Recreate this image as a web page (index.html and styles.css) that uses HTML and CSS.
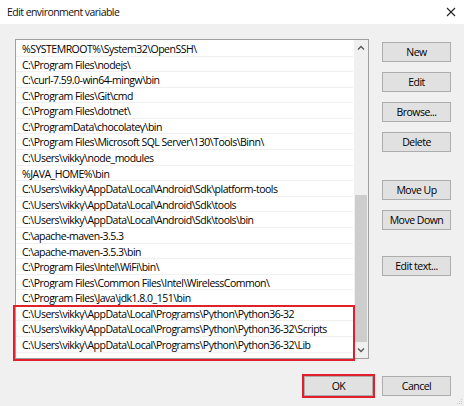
FILE: index.html
```html
<!DOCTYPE html>
<html>
<head>
<meta charset="utf-8">
<link rel="stylesheet" href="styles.css">
</head>
<body>
<div class="window">
  <div class="titlebar">
    <span class="title">Edit environment variable</span>
    <svg class="close" width="10" height="10" viewBox="0 0 10 10"><path d="M1 1 L9 9 M9 1 L1 9" stroke="#222" stroke-width="1.1" fill="none"/></svg>
  </div>
  <div class="content">
    <div class="listwrap">
      <div class="list">
        <div class="rows">
          <div class="row">%SYSTEMROOT%\System32\OpenSSH\</div>
          <div class="row">C:\Program Files\nodejs\</div>
          <div class="row">C:\curl-7.59.0-win64-mingw\bin</div>
          <div class="row">C:\Program Files\Git\cmd</div>
          <div class="row">C:\Program Files\dotnet\</div>
          <div class="row">C:\ProgramData\chocolatey\bin</div>
          <div class="row">C:\Program Files\Microsoft SQL Server\130\Tools\Binn\</div>
          <div class="row">C:\Users\vikky\node_modules</div>
          <div class="row">%JAVA_HOME%\bin</div>
          <div class="row">C:\Users\vikky\AppData\Local\Android\Sdk\platform-tools</div>
          <div class="row">C:\Users\vikky\AppData\Local\Android\Sdk\tools</div>
          <div class="row">C:\Users\vikky\AppData\Local\Android\Sdk\tools\bin</div>
          <div class="row">C:\apache-maven-3.5.3</div>
          <div class="row">C:\apache-maven-3.5.3\bin</div>
          <div class="row">C:\Program Files\Intel\WiFi\bin\</div>
          <div class="row">C:\Program Files\Common Files\Intel\WirelessCommon\</div>
          <div class="row">C:\Program Files\Java\jdk1.8.0_151\bin</div>
          <div class="row">C:\Users\vikky\AppData\Local\Programs\Python\Python36-32</div>
          <div class="row">C:\Users\vikky\AppData\Local\Programs\Python\Python36-32\Scripts</div>
          <div class="row">C:\Users\vikky\AppData\Local\Programs\Python\Python36-32\Lib</div>
        </div>
        <div class="scrollbar">
          <div class="arrow">
            <svg width="8" height="6" viewBox="0 0 8 6"><path d="M1 4.5 L4 1.5 L7 4.5" stroke="#555" stroke-width="1.3" fill="none"/></svg>
          </div>
          <div class="track"><div class="thumb"></div></div>
          <div class="arrow">
            <svg width="8" height="6" viewBox="0 0 8 6"><path d="M1 1.5 L4 4.5 L7 1.5" stroke="#555" stroke-width="1.3" fill="none"/></svg>
          </div>
        </div>
      </div>
      <div class="highlight"></div>
    </div>
    <div class="buttons">
      <button class="btn">New</button>
      <button class="btn">Edit</button>
      <button class="btn">Browse...</button>
      <button class="btn">Delete</button>
      <button class="btn g1">Move Up</button>
      <button class="btn">Move Down</button>
      <button class="btn g2">Edit text...</button>
    </div>
  </div>
  <div class="footer">
    <button class="btn ok">OK</button>
    <button class="btn">Cancel</button>
  </div>
  <svg class="grip" width="8" height="8" viewBox="0 0 8 8"><g fill="#c8c8c8"><rect x="6" y="2" width="1" height="1"/><rect x="4" y="4" width="1" height="1"/><rect x="6" y="4" width="1" height="1"/><rect x="2" y="6" width="1" height="1"/><rect x="4" y="6" width="1" height="1"/><rect x="6" y="6" width="1" height="1"/></g></svg>
</div>
</body>
</html>
```

FILE: styles.css
```css
html, body {
  margin: 0;
  padding: 0;
}
body {
  width: 464px;
  height: 406px;
  overflow: hidden;
  background: #f0f0f0;
  font-family: "Open Sans", "Noto Sans", sans-serif;
  color: #000;
}
.window {
  position: relative;
  width: 464px;
  height: 406px;
  background: #f0f0f0;
}
.titlebar {
  height: 24px;
  background: #fff;
  display: flex;
  align-items: center;
  justify-content: space-between;
  padding: 0 8px 0 7px;
  box-sizing: border-box;
}
.title {
  font-size: 10.5px;
  letter-spacing: -0.55px;
  color: #111;
}
.close {
  display: block;
}
.content {
  display: flex;
  padding: 15px 13px 0 15px;
  gap: 13px;
}
.listwrap {
  position: relative;
  width: 354px;
  height: 320px;
}
.list {
  box-sizing: border-box;
  width: 354px;
  height: 320px;
  border: 1px solid #a0a0a0;
  background: #fff;
  display: flex;
}
.rows {
  flex: 1;
  padding-top: 1px;
  padding-right: 1px;
}
.row {
  box-sizing: border-box;
  height: 15.58px;
  line-height: 16px;
  font-size: 10.5px;
  letter-spacing: -0.5px;
  padding-left: 6px;
  border-bottom: 1px solid #f0f0f0;
  white-space: nowrap;
  overflow: hidden;
}
.scrollbar {
  width: 14px;
  background: #f0f0f0;
  display: flex;
  flex-direction: column;
}
.arrow {
  height: 17px;
  display: flex;
  align-items: center;
  justify-content: center;
}
.track {
  flex: 1;
}
.thumb {
  margin: 139px 1px 0 1px;
  height: 147px;
  background: #cdcdcd;
}
.highlight {
  position: absolute;
  left: -2px;
  top: 266px;
  width: 342px;
  height: 56px;
  box-sizing: border-box;
  border: 2px solid #e0212b;
}
.buttons {
  display: flex;
  flex-direction: column;
  gap: 10px;
  margin-top: 3px;
}
.btn {
  box-sizing: border-box;
  width: 69px;
  height: 20px;
  padding: 0;
  background: #e1e1e1;
  border: 1px solid #adadad;
  font-family: "Open Sans", "Noto Sans", sans-serif;
  font-size: 10.5px;
  letter-spacing: -0.5px;
  color: #000;
  line-height: 17px;
}
.g1 {
  margin-top: 18px;
}
.g2 {
  margin-top: 16px;
}
.footer {
  display: flex;
  justify-content: flex-end;
  gap: 9px;
  padding: 17px 13px 0 0;
}
.ok {
  outline: 2px solid #e0212b;
  outline-offset: 0;
}
.grip {
  position: absolute;
  right: 1px;
  bottom: 1px;
}
```
